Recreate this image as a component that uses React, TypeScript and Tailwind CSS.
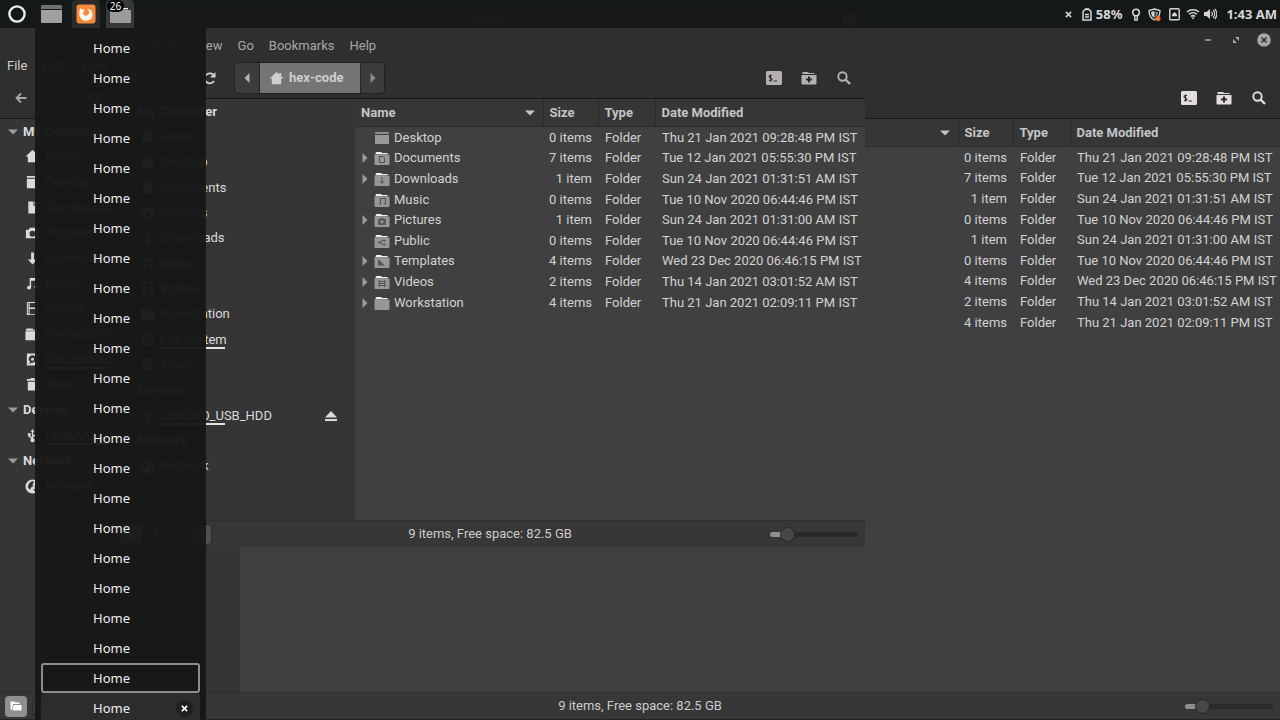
import React from "react";

interface Entry {
  name: string;
  size: string;
  modified: string;
  glyph?: string;
  expandable?: boolean;
}

interface Place {
  label: string;
  icon: string;
  heading?: boolean;
  usage?: boolean;
  eject?: boolean;
}

const entries: Entry[] = [
  { name: "Desktop", size: "0 items", modified: "Thu 21 Jan 2021 09:28:48 PM IST", glyph: "desktop" },
  { name: "Documents", size: "7 items", modified: "Tue 12 Jan 2021 05:55:30 PM IST", glyph: "document", expandable: true },
  { name: "Downloads", size: "1 item", modified: "Sun 24 Jan 2021 01:31:51 AM IST", glyph: "download", expandable: true },
  { name: "Music", size: "0 items", modified: "Tue 10 Nov 2020 06:44:46 PM IST", glyph: "music" },
  { name: "Pictures", size: "1 item", modified: "Sun 24 Jan 2021 01:31:00 AM IST", glyph: "camera", expandable: true },
  { name: "Public", size: "0 items", modified: "Tue 10 Nov 2020 06:44:46 PM IST", glyph: "share" },
  { name: "Templates", size: "4 items", modified: "Wed 23 Dec 2020 06:46:15 PM IST", glyph: "template", expandable: true },
  { name: "Videos", size: "2 items", modified: "Thu 14 Jan 2021 03:01:52 AM IST", glyph: "film", expandable: true },
  { name: "Workstation", size: "4 items", modified: "Thu 21 Jan 2021 02:09:11 PM IST", expandable: true },
];

const places: Place[] = [
  { label: "My Computer", icon: "", heading: true },
  { label: "Home", icon: "home" },
  { label: "Desktop", icon: "desktop" },
  { label: "Documents", icon: "document" },
  { label: "Pictures", icon: "camera" },
  { label: "Downloads", icon: "download" },
  { label: "Music", icon: "music" },
  { label: "Videos", icon: "film" },
  { label: "Workstation", icon: "folder" },
  { label: "File System", icon: "disk", usage: true },
  { label: "Trash", icon: "trash" },
  { label: "Devices", icon: "", heading: true },
  { label: "LENOVO_USB_HDD", icon: "usb", usage: true, eject: true },
  { label: "Network", icon: "", heading: true },
  { label: "Network", icon: "network" },
];

const menus = ["File", "Edit", "View", "Go", "Bookmarks", "Help"];

const placeIcons: Record<string, React.ReactNode> = {
  home: <path d="M8 1L0.5 8H3v6h10V8h2.5L13 5.600V2h-2v1.800z" />,
  desktop: <path d="M2 1h12v2H2zM2 4h12v10H2z" />,
  document: <path d="M3.500 1.500H9V6h4v8.500H3.500zM10 1.500L13 5h-3z" />,
  camera: (
    <path
      fillRule="evenodd"
      d="M5 3h6l1 2h3v9H1V5h3zM8 6a3.200 3.200 0 100 6.400A3.200 3.200 0 008 6z"
    />
  ),
  download: <path d="M6.500 1.500h3V9H13l-5 5.500L3 9h3.500z" />,
  music: (
    <path d="M5 2h9v9.500a2 2 0 11-1.500-2V5h-6v7.500a2.200 2 0 11-1.500-2z" />
  ),
  film: (
    <path
      fillRule="evenodd"
      d="M2 1h12v14H2zM3 2v2h1V2zm0 3v2h1V5zm0 3v2h1V8zm0 3v2h1v-2zM12 2v2h1V2zm0 3v2h1V5zm0 3v2h1V8zm0 3v2h1v-2zM5 2v5h6V2zm0 6.500V14h6V8.500z"
    />
  ),
  folder: <path d="M2 1.500h6l1 1.500h5v1H1V2.500zM0.500 4.500h15V14h-15z" />,
  disk: (
    <path
      fillRule="evenodd"
      d="M2 1.500h12v13H2zM8 3.500a4 4 0 00-2.500 7.200L4 13l3-1.600A4 4 0 108 3.500zm0 2.500a1.600 1.600 0 110 3.200A1.600 1.600 0 018 6z"
    />
  ),
  trash: <path d="M6 1h4v1h4v2H2V2h4zM3 5h10v9.500H3z" />,
  usb: (
    <g fill="none" stroke="currentColor" strokeWidth="1.500">
      <path d="M8 3v10M8 11L4.500 9V6.500M8 9l3.500-1.500V5" />
      <path d="M6 4l2-3 2 3z" fill="currentColor" stroke="none" />
      <circle cx="8" cy="13" r="1.500" fill="currentColor" />
      <circle cx="4.500" cy="7" r="1" fill="currentColor" />
    </g>
  ),
  network: (
    <path
      fillRule="evenodd"
      d="M8 .5a7.500 7.500 0 100 15 7.500 7.500 0 000-15zM4 5l3-2.500 3 .5-2 2.500 1 2-2 1-2 3-2-3zm6 3l3-2 1 2-2 4-2 1-1-2 2-1z"
    />
  ),
};

const folderGlyphs: Record<string, React.ReactNode> = {
  document: <path d="M5.500 5.500h3.500l1.500 1.500v4.500h-5z" fill="none" stroke="#4e4e4e" />,
  download: <path d="M8 5v6M5.500 9L8 11.500 10.500 9" fill="none" stroke="#4e4e4e" />,
  music: <path d="M5 11h1.500V5.500h5V11H9.500" fill="none" stroke="#4e4e4e" />,
  camera: <path fillRule="evenodd" fill="#5a5a5a" d="M6 5h4l1 1h1v6H4V6h1zM8 7.200a1.500 1.500 0 100 3 1.500 1.500 0 000-3z" />,
  share: (
    <g fill="#4e4e4e" stroke="#4e4e4e">
      <path d="M5.500 8.500L10 6M5.500 8.500L10 11" />
      <path d="M4.500 8h1v1h-1zM10 6h1v1h-1zM10 10h1v1h-1z" />
    </g>
  ),
  template: <path d="M4 5l7 6.500H4z" fill="#555555" />,
  film: <path d="M5.500 5v7M10.500 5v7M4 6.500h8M4 8.500h8M4 10.500h8" fill="none" stroke="#5a5a5a" />,
};

const Triangle: React.FC<{ dir: "down" | "right" | "left"; className?: string }> = ({
  dir,
  className,
}) => {
  const d = {
    down: "M0 2.500h10L5 7.500z",
    right: "M2.500 0v10l5-5z",
    left: "M7.500 0v10l-5-5z",
  }[dir];
  return (
    <svg viewBox="0 0 10 10" className={`h-[10px] w-[10px] shrink-0 ${className ?? ""}`} fill="currentColor">
      <path d={d} />
    </svg>
  );
};

const PlaceIcon: React.FC<{ name: string }> = ({ name }) => (
  <svg viewBox="0 0 16 16" className="h-[15px] w-[15px] shrink-0" fill="currentColor">
    {placeIcons[name]}
  </svg>
);

const FolderIcon: React.FC<{ glyph?: string }> = ({ glyph }) => (
  <svg viewBox="0 0 16 14" className="h-[14px] w-4 shrink-0">
    {glyph === "desktop" ? (
      <>
        <path d="M1 1h14v2H1z" fill="#8a8a8a" />
        <path d="M1 4h14v9H1z" fill="#989898" />
      </>
    ) : (
      <>
        <path d="M2 1h5l1 1h5.500v2H1V2z" fill="#7c7c7c" />
        <path d="M2 1h5l1 1h5.500v1H2z" fill="#eeeeee" />
        <path d="M.5 3.500h15V13a1 1 0 01-1 1h-13a1 1 0 01-1-1z" fill="#979797" />
        {glyph && folderGlyphs[glyph]}
      </>
    )}
  </svg>
);

const IconButton: React.FC<{ label: string; children: React.ReactNode; className?: string }> = ({
  label,
  children,
  className,
}) => (
  <button aria-label={label} className={`flex h-[30px] w-[35px] items-center justify-center ${className ?? ""}`}>
    <svg viewBox="0 0 16 16" className="h-4 w-4">
      {children}
    </svg>
  </button>
);

const TitleBar: React.FC<{ maximized?: boolean }> = ({ maximized }) => (
  <div className="grid h-6 grid-cols-[1fr_auto_1fr] items-center text-[#a6a6a6]">
    <span />
    <span className="font-bold">{maximized ? "" : "Home"}</span>
    <div className="flex justify-end gap-[14px] pr-[9px]">
      <button aria-label="Minimize">
        <svg viewBox="0 0 14 14" className="h-[14px] w-[14px]">
          <path d="M4 7h6" stroke="currentColor" strokeWidth="1.500" />
        </svg>
      </button>
      <button aria-label="Restore">
        <svg viewBox="0 0 14 14" className="h-[14px] w-[14px]" fill="currentColor">
          <path d="M6 4h4v4zM4 6v4h4z" />
        </svg>
      </button>
      <button aria-label="Close">
        <svg viewBox="0 0 14 14" className="h-[14px] w-[14px]">
          <circle cx="7" cy="7" r="6.800" fill="currentColor" />
          <path d="M4.500 4.500l5 5M9.500 4.500l-5 5" stroke="#2f2f2f" strokeWidth="1.600" />
        </svg>
      </button>
    </div>
  </div>
);

const Toolbar: React.FC<{ maximized?: boolean }> = ({ maximized }) => (
  <div className="flex h-[41px] items-center border-b border-[#181818] pr-1 pl-[3px]">
    <IconButton label="Back" className="text-[#a8a8a8]">
      <path d="M13.500 8H3.500M8 3.500L3.500 8 8 12.500" fill="none" stroke="currentColor" strokeWidth="1.800" />
    </IconButton>
    <IconButton label="Forward" className="text-[#6a6a6a]">
      <path d="M2.500 8h10M8 3.500l4.500 4.500L8 12.500" fill="none" stroke="currentColor" strokeWidth="1.800" />
    </IconButton>
    <IconButton label="Reload" className="ml-1 text-[#d0d0d0]">
      <path d="M12 11A5 5 0 1111 4.500" fill="none" stroke="currentColor" strokeWidth="1.800" />
      <path d="M13.500 2v5.500H8z" fill="currentColor" />
    </IconButton>
    <div className="ml-[7px] flex h-8 overflow-hidden rounded-sm border border-[#212121] bg-[#3c3c3c] text-[#b4b4b4]">
      <button aria-label="Scroll left" className="flex w-[25px] items-center justify-center border-r border-[#262626]">
        <Triangle dir="left" />
      </button>
      <button className="flex w-[100px] items-center gap-[5px] bg-[#757575] pl-[9px] font-bold text-[#cfcfcf]">
        <PlaceIcon name="home" />
        hex-code
      </button>
      <button aria-label="Scroll right" className="flex w-6 items-center justify-center border-l border-[#262626] text-[#8c8c8c]">
        <Triangle dir="right" />
      </button>
    </div>
    <div className={`ml-auto flex ${maximized ? "text-[#e2dede]" : "text-[#b5b1b1]"}`}>
      <IconButton label="Open in terminal">
        <rect x="0" y="1" width="16" height="14" rx="1.500" fill="currentColor" />
        <path
          d="M6 5.500H4.200Q3 5.500 3 6.600T4.500 8 6 9.300 4.800 10.500H3M4.500 4.500v7M7.500 11H11"
          fill="none"
          stroke="#303030"
          strokeWidth="1.100"
        />
      </IconButton>
      <IconButton label="New folder">
        <path d="M1.500 2H7l1 1h5.500v1h-12zM.5 5h15v8.500a1 1 0 01-1 1h-13a1 1 0 01-1-1z" fill="currentColor" />
        <path d="M8 6.500v6M5 9.500h6" stroke="#2b2b2b" strokeWidth="2" />
      </IconButton>
      <IconButton label="Search">
        <circle cx="6.500" cy="6.500" r="4.200" fill="none" stroke="currentColor" strokeWidth="1.900" />
        <path d="M9.500 9.500l4.500 4.500" stroke="currentColor" strokeWidth="2.400" />
      </IconButton>
    </div>
  </div>
);

const Sidebar: React.FC = () => (
  <nav className="w-60 shrink-0 bg-[#353535] text-[#dadada]">
    <ul className="grid h-[380px] auto-rows-fr">
      {places.map((place, i) =>
        place.heading ? (
          <li key={i} className="flex items-center gap-[5px] pl-2 font-bold">
            <Triangle dir="down" className="text-[#9a9a9a]" />
            {place.label}
          </li>
        ) : (
          <li key={i} className="flex items-center gap-[5px] pr-[17px] pl-[25px]">
            <PlaceIcon name={place.icon} />
            <span className="relative whitespace-nowrap">
              {place.label}
              {place.usage && <span className="absolute bottom-0 left-0 h-[2px] w-[65px] bg-[#e4e4e4]" />}
            </span>
            {place.eject && (
              <button aria-label="Eject" className="ml-auto">
                <svg viewBox="0 0 14 14" className="h-[14px] w-[14px]" fill="currentColor">
                  <path d="M7 2l6 6.500H1zM1 10h12v2H1z" />
                </svg>
              </button>
            )}
          </li>
        ),
      )}
    </ul>
  </nav>
);

const FileTable: React.FC = () => (
  <div className="min-w-0 flex-1 bg-[#404040]">
    <table className="h-[213px] w-full table-fixed border-collapse text-[#d2d2d2]">
      <thead className="bg-[#363636] text-[#c4c4c4]">
        <tr className="h-[27px] border-b border-[#2d2d2d] text-left">
          <th className="pt-[2px] pb-0 pl-[6px]">
            <div className="flex items-center justify-between pr-2">
              Name
              <Triangle dir="down" />
            </div>
          </th>
          <th className="w-[55px] border-l border-[#2b2b2b] pt-[2px] pb-0 pl-[6px]">Size</th>
          <th className="w-[57px] border-l border-[#2b2b2b] pt-[2px] pb-0 pl-[6px]">Type</th>
          <th className="w-[210px] border-l border-[#2b2b2b] pt-[2px] pb-0 pl-[6px]">Date Modified</th>
        </tr>
      </thead>
      <tbody>
        {entries.map((entry) => (
          <tr key={entry.name}>
            <td className="p-0 pt-[2px] pl-[5px]">
              <div className="flex items-center gap-1">
                <Triangle dir="right" className={entry.expandable ? "text-[#9a9a9a]" : "invisible"} />
                <FolderIcon glyph={entry.glyph} />
                {entry.name}
              </div>
            </td>
            <td className="p-0 pt-[2px] pr-[6px] text-right whitespace-nowrap">{entry.size}</td>
            <td className="p-0 pt-[2px] pl-[7px]">Folder</td>
            <td className="p-0 pt-[2px] pl-[7px] whitespace-nowrap">{entry.modified}</td>
          </tr>
        ))}
      </tbody>
    </table>
  </div>
);

const StatusBar: React.FC = () => (
  <footer className="grid h-[27px] grid-cols-[1fr_auto_1fr] items-center border-t border-[#303030] bg-[#373737] px-[5px] text-[#cccccc]">
    <div className="flex items-center gap-[5px]">
      <button aria-label="Show places" className="flex h-[21px] w-[22px] items-center justify-center rounded-sm bg-[#8f8f8f] text-white">
        <svg viewBox="0 0 12 12" className="h-3 w-3" fill="currentColor">
          <path d="M.5 1.500h4l1 1h4V4H3L2 9.500H.500zM3.500 5h8v5.500h-9z" />
        </svg>
      </button>
      <button aria-label="Show tree" className="flex h-[21px] w-6 items-center justify-center rounded-sm border border-[#2a2a2a]">
        <svg viewBox="0 0 12 12" className="h-3 w-3" fill="none" stroke="currentColor">
          <path d="M2.500 1v9h4M2.500 5h4M7 5h3M7 10h3" strokeWidth="1.500" />
        </svg>
      </button>
      <button aria-label="Hide sidebar" className="ml-3 flex h-[21px] w-6 items-center justify-center rounded-sm border border-[#2a2a2a] bg-[#505050]">
        <svg viewBox="0 0 12 12" className="h-3 w-3" fill="none" stroke="currentColor">
          <path d="M1 1.500h10v9H1zM3.500 1.500v9M9 4L6 6l3 2" />
        </svg>
      </button>
    </div>
    <span>9 items, Free space: 82.5 GB</span>
    <input
      type="range"
      aria-label="Zoom"
      min="0"
      max="100"
      defaultValue="14"
      className="mr-[2px] h-[5px] w-[88px] appearance-none justify-self-end rounded-full bg-[linear-gradient(to_right,#8e8e8e_12px,#292929_12px)] [&::-webkit-slider-thumb]:h-[15px] [&::-webkit-slider-thumb]:w-[15px] [&::-webkit-slider-thumb]:appearance-none [&::-webkit-slider-thumb]:rounded-full [&::-webkit-slider-thumb]:border [&::-webkit-slider-thumb]:border-[#262626] [&::-webkit-slider-thumb]:bg-[#474747]"
    />
  </footer>
);

const FileManager: React.FC<{ maximized?: boolean; className: string }> = ({ maximized, className }) => (
  <section className={`absolute flex flex-col bg-[#2f2f2f] font-[Roboto,sans-serif] ${className}`}>
    <TitleBar maximized={maximized} />
    <div className={`flex h-[26px] items-center gap-[15px] pt-[2px] pl-[7px] ${maximized ? "text-[#d0d0d0]" : "text-[#a8a8a8]"}`}>
      {menus.map((menu) => (
        <button key={menu}>{menu}</button>
      ))}
    </div>
    <Toolbar maximized={maximized} />
    <div className="flex min-h-0 flex-1">
      <Sidebar />
      <FileTable />
    </div>
    <StatusBar />
  </section>
);

/* window list that drops down from the grouped panel button */
const WindowList: React.FC = () => (
  <ul className="absolute top-7 bottom-0 left-[35px] w-[171px] overflow-hidden bg-[#181818]/97 px-[6px] pt-[5px] text-[#eeeeee]">
    {Array.from({ length: 23 }, (_, i) => (
      <li
        key={i}
        className={`flex h-[30px] items-center rounded-[3px] border-2 ${
          i === 21 ? "border-[#8c8c8c]" : i === 22 ? "border-transparent bg-[#2c2c2c]" : "border-transparent"
        }`}
      >
        <button className="flex-1 pl-1 text-center">Home</button>
        <button
          aria-label="Close window"
          className={`mr-[5px] flex h-[17px] w-[17px] items-center justify-center rounded-full bg-[#202020] ${
            i === 22 ? "" : "invisible"
          }`}
        >
          <svg viewBox="0 0 8 8" className="h-[7px] w-[7px]">
            <path d="M1 1l6 6M7 1L1 7" stroke="#ffffff" strokeWidth="1.800" />
          </svg>
        </button>
      </li>
    ))}
  </ul>
);

const Panel: React.FC = () => (
  <header className="absolute inset-x-0 top-0 flex h-7 items-center bg-[#161819]/97 text-[#d6d6d6]">
    <button aria-label="Menu" className="ml-2">
      <svg viewBox="0 0 18 18" className="h-[18px] w-[18px]">
        <circle cx="9" cy="9" r="7.600" fill="none" stroke="#eeeeee" strokeWidth="2.400" />
      </svg>
    </button>
    <button aria-label="Files" className="ml-[15px]">
      <svg viewBox="0 0 21 18" className="h-[18px] w-[21px]">
        <path d="M0 1a1 1 0 011-1h19a1 1 0 011 1v3H0z" fill="#707070" />
        <path d="M0 5h21v12a1 1 0 01-1 1H1a1 1 0 01-1-1z" fill="#a0a0a0" />
      </svg>
    </button>
    <button aria-label="Firefox" className="ml-[10px] flex h-7 w-7 items-center justify-center rounded-t-sm bg-[#2a2a2a]">
      <svg viewBox="0 0 20 20" className="h-5 w-5">
        <rect x=".5" y=".5" width="19" height="19" rx="3" fill="#f58a3c" />
        <path
          d="M3.500 7C3.800 5.500 4.300 4.500 5 3.800c.2.900.7 1.500 1.400 1.900.9-.2 1.800-.1 2.600.4-.4.700-1 1-1.600 1.300.2.800.1 1.300-.4 1.800.2 1.900 1.900 2.900 3.600 2.400 2-.6 2.900-2.400 2.400-4.400-.3-1.100-.9-1.900-1.800-2.600 3 .4 5.200 2.800 5.300 5.700.1 3.700-2.800 6.500-6.400 6.500-3.800 0-6.700-2.900-6.800-6.500 0-1.200 0-2.300.2-3.300z"
          fill="#fff6ee"
        />
      </svg>
    </button>
    <button aria-label="Home windows" className="relative ml-[6px] flex h-7 w-7 items-center justify-center rounded-t-sm bg-[#383838]">
      <svg viewBox="0 0 21 18" className="h-[18px] w-[21px]">
        <path d="M2 2h9l1 1h6v3H1V2z" fill="#7c7c7c" />
        <path d="M2 2h9l1 1h6v1H2z" fill="#eeeeee" />
        <path d="M0 5h21v12a1 1 0 01-1 1H1a1 1 0 01-1-1z" fill="#9a9a9a" />
      </svg>
      <span className="absolute top-0 left-px h-3 w-[17px] rounded-full bg-black text-center text-[10px] leading-3 text-white">26</span>
    </button>
    <div className="ml-auto flex items-center pr-[3px] font-bold">
      <svg viewBox="0 0 8 8" className="h-[7px] w-[7px]">
        <path d="M1 1l6 6M7 1L1 7" stroke="currentColor" strokeWidth="1.700" />
      </svg>
      <svg viewBox="0 0 10 13" className="ml-[10px] h-[13px] w-[10px]" fill="none" stroke="currentColor">
        <path d="M1 3.500L3 1.500h4l2 2v8.500H1z" strokeWidth="1.500" />
        <path d="M3 .8h4M3 6.500h4M3 9h4" strokeWidth="1.300" />
      </svg>
      <span className="ml-1">58%</span>
      <svg viewBox="0 0 10 13" className="ml-[9px] h-[13px] w-[10px]" fill="none" stroke="currentColor">
        <circle cx="5" cy="4.500" r="3.300" strokeWidth="1.600" />
        <path d="M3.800 7.500v4.500h2.400V7.500" strokeWidth="1.400" />
      </svg>
      <svg viewBox="0 0 13 13" className="ml-[7px] h-[13px] w-[13px]">
        <path d="M6.500 1L12 2.500C12 8 10 10.500 6.500 12 3 10.500 1 8 1 2.500z" fill="none" stroke="currentColor" strokeWidth="1.300" />
        <path d="M6.500 3L3 4c.2 3 1.300 5 3.500 6z" fill="currentColor" />
        <path d="M7.500 3.500L10 4.200c0 2-.8 3.800-2.500 5.300z" fill="#8a8a8a" />
        <circle cx="10" cy="10.500" r="2.500" fill="#f3732c" />
      </svg>
      <svg viewBox="0 0 11 13" className="ml-2 h-[13px] w-[11px]">
        <rect x=".8" y=".8" width="9.400" height="11" rx="1" fill="none" stroke="currentColor" strokeWidth="1.400" />
        <path d="M5.500 4L8 6.500v1.700H3V6.500z" fill="currentColor" />
      </svg>
      <svg viewBox="0 0 14 12" className="ml-[6px] h-3 w-[14px]" fill="none" stroke="currentColor" strokeWidth="1.500">
        <path d="M1 4a9 9 0 0112 0M3 6.300a6 6 0 018 0M5 8.500a3 3 0 014 0" />
        <path d="M5.500 9.500h3L7 11.500z" fill="currentColor" stroke="none" />
      </svg>
      <svg viewBox="0 0 13 12" className="ml-1 h-3 w-[13px]" fill="none" stroke="currentColor">
        <path d="M0 4h2.500L6 1v10L2.500 8H0z" fill="currentColor" stroke="none" />
        <path d="M7.500 4a3 3 0 010 4M9 2.200a5 5 0 010 7.600M10.700 1a7 7 0 010 10" strokeWidth="1.200" />
      </svg>
      <time className="ml-[9px]">1:43 AM</time>
    </div>
  </header>
);

const App: React.FC = () => (
  <main className="relative h-screen overflow-hidden bg-[#0d202b] font-['Noto_Sans','Open_Sans',sans-serif] text-[13px] leading-[18px] select-none">
    <FileManager maximized className="inset-x-0 top-7 bottom-0 border-b border-[#242424]" />
    <FileManager className="top-2 left-[115px] h-[539px] w-[750px]" />
    <Panel />
    <WindowList />
  </main>
);

export default App;
